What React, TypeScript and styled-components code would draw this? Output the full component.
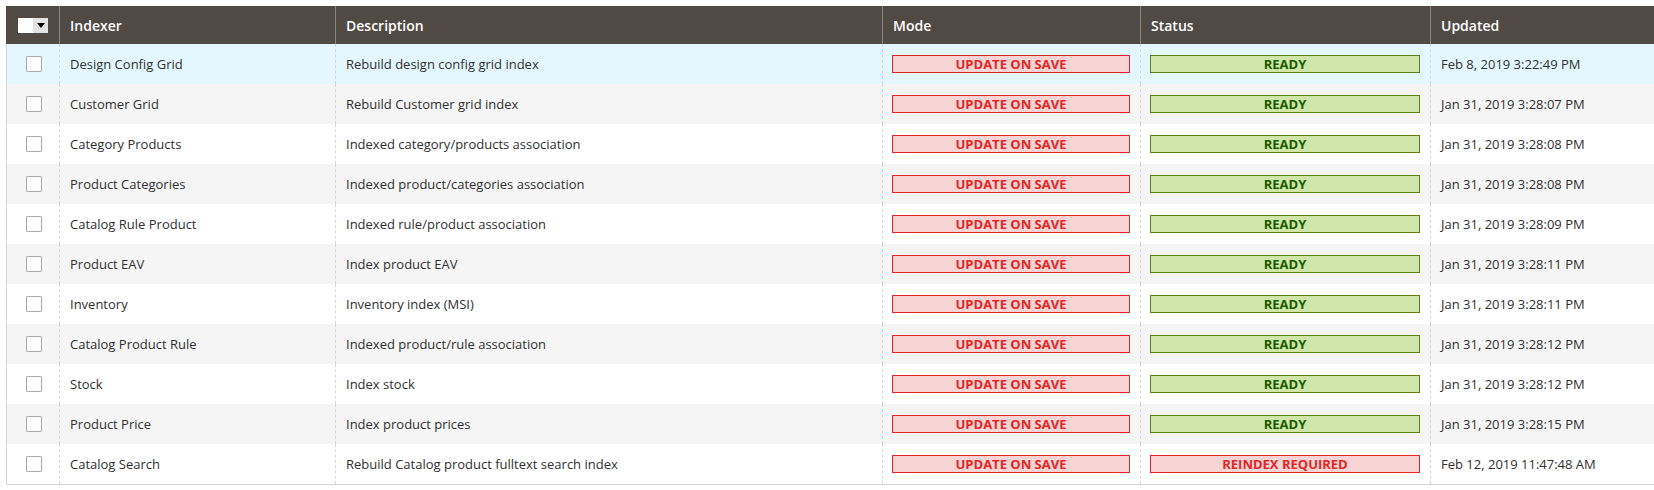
import styled, { createGlobalStyle } from 'styled-components'

const GlobalStyle = createGlobalStyle`
  html, body {
    margin: 0;
    padding: 0;
    background: #ffffff;
    overflow: hidden;
  }
  body {
    font-family: "Open Sans", "Liberation Sans", Arial, sans-serif;
    color: #303030;
  }
`

const Page = styled.div`
  padding: 6px 0 0 6px;
  width: 1648px;
`

const Grid = styled.div`
  display: flex;
  flex-direction: column;
  border-bottom: 1px solid #d6d6d6;
`

const cols = '53px 276px 547px 258px 290px 1fr'

const HeadRow = styled.div`
  display: grid;
  grid-template-columns: ${cols};
  height: 38px;
  background: #514943;
`

const HeadCell = styled.div`
  display: flex;
  align-items: center;
  padding: 0 10px;
  border-left: 1px solid #8a837f;
  color: #ffffff;
  font-size: 14px;
  font-weight: 600;
  white-space: nowrap;
  &:first-child {
    border-left-color: #514943;
    justify-content: center;
    padding: 0 0 0 2px;
  }
`

const Row = styled.div<{ $bg: string }>`
  display: grid;
  grid-template-columns: ${cols};
  height: 40px;
  background: ${(p) => p.$bg};
`

const Cell = styled.div`
  display: flex;
  align-items: center;
  padding: 0 10px;
  border-left: 1px dashed #d6d6d6;
  font-size: 13px;
  white-space: nowrap;
  overflow: hidden;
  &:first-child {
    border-left: 1px solid #d6d6d6;
    justify-content: center;
    padding: 0 0 0 2px;
  }
`

const BadgeCell = styled(Cell)`
  padding: 0 10px 0 9px;
`

const Check = styled.span`
  display: block;
  width: 16px;
  height: 16px;
  box-sizing: border-box;
  background: #ffffff;
  border: 1px solid #adadad;
  border-radius: 1px;
`

const MultiSelect = styled.span`
  display: flex;
  height: 15px;
  margin-left: -2px;
`

const MultiBox = styled.span`
  display: block;
  width: 15px;
  height: 15px;
  background: #ffffff;
`

const MultiArrow = styled.span`
  display: flex;
  align-items: center;
  justify-content: center;
  width: 15px;
  height: 15px;
  background: #e3e3e3;
  &::after {
    content: '';
    border-left: 4px solid transparent;
    border-right: 4px solid transparent;
    border-top: 5px solid #000000;
    margin-top: 1px;
  }
`

const Badge = styled.span<{ $kind: 'critical' | 'notice' }>`
  display: block;
  width: 100%;
  height: 18px;
  box-sizing: border-box;
  border: 1px solid ${(p) => (p.$kind === 'critical' ? '#e22626' : '#5b8116')};
  background: ${(p) => (p.$kind === 'critical' ? '#f9d4d4' : '#d0e5a9')};
  color: ${(p) => (p.$kind === 'critical' ? '#e22626' : '#185b00')};
  font-size: 13px;
  font-weight: 700;
  line-height: 16px;
  text-align: center;
  text-transform: uppercase;
`

type Indexer = {
  title: string
  description: string
  status: 'ready' | 'reindex'
  updated: string
}

const rows: Indexer[] = [
  { title: 'Design Config Grid', description: 'Rebuild design config grid index', status: 'ready', updated: 'Feb 8, 2019 3:22:49 PM' },
  { title: 'Customer Grid', description: 'Rebuild Customer grid index', status: 'ready', updated: 'Jan 31, 2019 3:28:07 PM' },
  { title: 'Category Products', description: 'Indexed category/products association', status: 'ready', updated: 'Jan 31, 2019 3:28:08 PM' },
  { title: 'Product Categories', description: 'Indexed product/categories association', status: 'ready', updated: 'Jan 31, 2019 3:28:08 PM' },
  { title: 'Catalog Rule Product', description: 'Indexed rule/product association', status: 'ready', updated: 'Jan 31, 2019 3:28:09 PM' },
  { title: 'Product EAV', description: 'Index product EAV', status: 'ready', updated: 'Jan 31, 2019 3:28:11 PM' },
  { title: 'Inventory', description: 'Inventory index (MSI)', status: 'ready', updated: 'Jan 31, 2019 3:28:11 PM' },
  { title: 'Catalog Product Rule', description: 'Indexed product/rule association', status: 'ready', updated: 'Jan 31, 2019 3:28:12 PM' },
  { title: 'Stock', description: 'Index stock', status: 'ready', updated: 'Jan 31, 2019 3:28:12 PM' },
  { title: 'Product Price', description: 'Index product prices', status: 'ready', updated: 'Jan 31, 2019 3:28:15 PM' },
  { title: 'Catalog Search', description: 'Rebuild Catalog product fulltext search index', status: 'reindex', updated: 'Feb 12, 2019 11:47:48 AM' },
]

const rowBg = (i: number) => (i === 0 ? '#e5f7fe' : i % 2 === 1 ? '#f5f5f5' : '#ffffff')

export default function App() {
  return (
    <Page>
      <GlobalStyle />
      <Grid>
        <HeadRow>
          <HeadCell>
            <MultiSelect>
              <MultiBox />
              <MultiArrow />
            </MultiSelect>
          </HeadCell>
          <HeadCell>Indexer</HeadCell>
          <HeadCell>Description</HeadCell>
          <HeadCell>Mode</HeadCell>
          <HeadCell>Status</HeadCell>
          <HeadCell>Updated</HeadCell>
        </HeadRow>
        {rows.map((r, i) => (
          <Row key={r.title} $bg={rowBg(i)}>
            <Cell>
              <Check />
            </Cell>
            <Cell>{r.title}</Cell>
            <Cell>{r.description}</Cell>
            <BadgeCell>
              <Badge $kind="critical">Update on Save</Badge>
            </BadgeCell>
            <BadgeCell>
              {r.status === 'ready' ? (
                <Badge $kind="notice">Ready</Badge>
              ) : (
                <Badge $kind="critical">Reindex required</Badge>
              )}
            </BadgeCell>
            <Cell>{r.updated}</Cell>
          </Row>
        ))}
      </Grid>
    </Page>
  )
}
